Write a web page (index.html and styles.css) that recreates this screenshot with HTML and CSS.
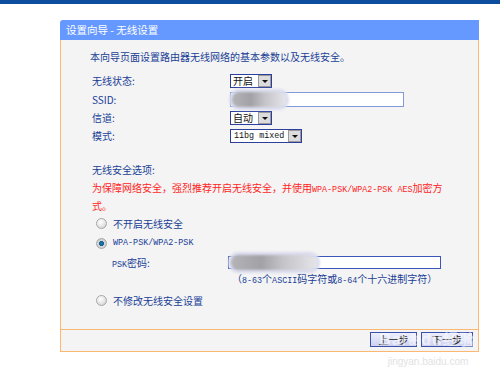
FILE: index.html
```html
<!DOCTYPE html>
<html>
<head>
    <meta charset="utf-8" />
    <title>设置向导 - 无线设置</title>
    <link rel="stylesheet" href="styles.css">
</head>
<body>
<!-- Top strip -->
<div class="top-strip"></div>

<div class="dialog">
    <div class="dlg-head">设置向导 - 无线设置</div>

    <div class="dlg-body">
        <p class="intro">本向导页面设置路由器无线网络的基本参数以及无线安全。</p>

        <!-- Basic wireless settings -->
        <div class="form">
            <span class="label">无线状态:</span>
            <div class="select sel-short"><span class="val">开启</span><span class="arrow"></span></div>

            <span class="label">SSID:</span>
            <div class="input ssid"><span class="mask"></span></div>

            <span class="label">信道:</span>
            <div class="select sel-short"><span class="val">自动</span><span class="arrow"></span></div>

            <span class="label">模式:</span>
            <div class="select sel-mode"><span class="val en">11bg mixed</span><span class="arrow"></span></div>
        </div>

        <p class="sec-title">无线安全选项:</p>
        <p class="warn">为保障网络安全，强烈推荐开启无线安全，并使用<span class="en">WPA-PSK/WPA2-PSK AES</span>加密方式。</p>

        <!-- Security options -->
        <div class="opt"><span class="radio"></span>不开启无线安全</div>
        <div class="opt"><span class="radio checked"></span><span class="en">WPA-PSK/WPA2-PSK</span></div>
        <div class="psk-row">
            <span class="psk-label"><span class="en">PSK</span>密码:</span>
            <div class="input psk"><span class="mask"></span></div>
        </div>
        <div class="hint">（<span class="en">8-63</span>个<span class="en">ASCII</span>码字符或<span class="en">8-64</span>个十六进制字符）</div>
        <div class="opt opt-last"><span class="radio"></span>不修改无线安全设置</div>
    </div>

    <div class="dlg-foot">
        <button class="btn btn-prev">上一步</button>
        <button class="btn btn-next">下一步</button>
    </div>
</div>

<!-- faint watermark from the screenshot source -->
<div class="watermark">
    <span class="wm-logo">Bai<span class="paw">❀</span>du经验</span>
    <span class="wm-url">jingyan.baidu.com</span>
</div>
</body>
</html>
```

FILE: styles.css
```css
/* ============ Router wizard page ============ */
* {
  box-sizing: border-box;
}
body {
  margin: 0;
  padding: 0;
  background-color: #fff;
  font-family: "Noto Sans CJK SC", sans-serif;
  font-size: 10px;
  color: #203e96;
  position: relative;
  height: 375px;
  overflow: hidden;
}
p {
  margin: 0;
}
.en {
  font-family: "Liberation Mono", monospace;
  font-size: 8.4px;
}
.top-strip {
  height: 4px;
  background-color: #0c4d9e;
}
.dialog {
  margin: 16px 0 0 60px;
  width: 419px;
}
.dlg-head {
  height: 20px;
  line-height: 20px;
  padding-left: 6px;
  background-color: #6699ff;
  color: #fff;
  font-size: 10.5px;
  border-radius: 3px 0 0 0;
}
.dlg-body {
  height: 289px;
  padding: 10px 0 0 31px;
  background-color: #f4f4f4;
  border-left: 1px solid #fcb870;
  border-right: 1px solid #fcb870;
}
.intro {
  margin-left: -2px;
  line-height: 14px;
}
.form {
  display: grid;
  grid-template-columns: 138px auto;
  row-gap: 4px;
  align-items: center;
  margin-top: 10px;
  justify-items: start;
}
.label {
  line-height: 14px;
}
.select {
  display: flex;
  height: 14px;
  background-color: #fff;
  border: 1px solid #2c3f9c;
}
.select .val {
  flex: 1;
  padding: 0 2px;
  line-height: 12px;
  color: #111;
}
.select .val.en {
  padding-left: 3px;
}
.select .arrow {
  width: 13px;
  background-color: #dcdcdc;
  border: 1px solid #fff;
  outline: 1px solid #9a9a9a;
  outline-offset: -1px;
  display: flex;
  align-items: center;
  justify-content: center;
}
.select .arrow:after {
  content: "";
  border-left: 3px solid transparent;
  border-right: 3px solid transparent;
  border-top: 3px solid #111;
}
.sel-short {
  width: 42px;
}
.sel-mode {
  width: 72px;
}
.input {
  position: relative;
  background-color: #fff;
}
.ssid {
  width: 174px;
  height: 15px;
  border: 1px solid #8199d8;
}
.psk {
  width: 213px;
  height: 13px;
  border: 1px solid #3b56b9;
}
/* blurred-out values */
.mask {
  position: absolute;
  border-radius: 7px;
  background: linear-gradient(90deg, #b4b4b8 0%, #a2a2a6 35%, #c4c4c8 60%, #e4e4ea 100%);
  box-shadow: 0 0 0 3px #dadcee;
  filter: blur(1.2px);
}
.ssid .mask {
  left: 1px;
  top: -1px;
  width: 54px;
  height: 15px;
}
.psk .mask {
  left: 2px;
  top: -2px;
  width: 86px;
  height: 15px;
}
.sec-title {
  margin-top: 19px;
  line-height: 15px;
}
.warn {
  width: 356px;
  margin-top: 3px;
  line-height: 15px;
  color: #ff1e1e;
}
.opt {
  display: flex;
  align-items: center;
  height: 20px;
  margin-top: 0;
}
.opt-last {
  margin-top: 4px;
}
.radio {
  width: 11px;
  height: 11px;
  margin: 0 6px 0 4px;
  border-radius: 50%;
  border: 1px solid #a8a8a8;
  background: radial-gradient(circle at 40% 35%, #fff 0%, #e4e4e4 55%, #c4c4c4 100%);
}
.radio.checked {
  background: radial-gradient(circle, #0f7fb4 0%, #1a5f90 35%, #d8d8d8 45%, #c0c0c0 100%);
}
.psk-row {
  display: flex;
  align-items: center;
  height: 19px;
  padding-left: 20px;
}
.psk-label {
  width: 116px;
}
.hint {
  height: 14px;
  line-height: 14px;
  padding-left: 140px;
}
.dlg-foot {
  height: 23px;
  display: flex;
  justify-content: flex-end;
  align-items: flex-start;
  gap: 4px;
  padding: 2px 5px 0 0;
  background-color: #f4f4f4;
  border: 1px solid #fcb870;
}
.btn {
  height: 15px;
  padding: 0;
  border: 1px solid #3c50aa;
  background: linear-gradient(#eceefc, #cdd1f0);
  font-family: "Noto Sans CJK SC", sans-serif;
  font-size: 10px;
  line-height: 13px;
  color: #222;
}
.btn-prev {
  width: 47px;
}
.btn-next {
  width: 52px;
}
.watermark {
  position: absolute;
  left: 378px;
  top: 331px;
  width: 100px;
  display: flex;
  flex-direction: column;
  align-items: center;
  pointer-events: none;
}
.wm-logo {
  font-family: "Liberation Sans", sans-serif;
  font-weight: bold;
  font-size: 16px;
  line-height: 18px;
  color: rgba(255, 255, 255, 0.55);
  letter-spacing: 1px;
}
.wm-url {
  margin-top: 7px;
  font-family: "Liberation Sans", sans-serif;
  font-size: 10px;
  line-height: 12px;
  color: #e2e2e2;
}
```
